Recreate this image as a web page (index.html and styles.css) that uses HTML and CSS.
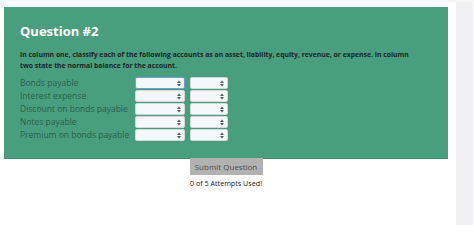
FILE: index.html
```html
<!DOCTYPE html>
<html>
<head>
<meta charset="utf-8">
<link rel="stylesheet" href="styles.css">
</head>
<body>
<div class="page">
  <div class="main">
    <div class="question">
      <h2 class="title">Question #2</h2>
      <p class="prompt">In column one, classify each of the following accounts as an asset, liability, equity, revenue, or expense. In column two state the normal balance for the account.</p>
      <div class="rows">
        <div class="row">
          <span class="label">Bonds payable</span>
          <div class="sel wide focus"><svg class="arr" viewBox="0 0 4 7"><path d="M0 3 L2 0.5 L4 3 Z M0 4 L2 6.5 L4 4 Z"/></svg></div>
          <div class="sel narrow"><svg class="arr" viewBox="0 0 4 7"><path d="M0 3 L2 0.5 L4 3 Z M0 4 L2 6.5 L4 4 Z"/></svg></div>
        </div>
        <div class="row">
          <span class="label">Interest expense</span>
          <div class="sel wide"><svg class="arr" viewBox="0 0 4 7"><path d="M0 3 L2 0.5 L4 3 Z M0 4 L2 6.5 L4 4 Z"/></svg></div>
          <div class="sel narrow"><svg class="arr" viewBox="0 0 4 7"><path d="M0 3 L2 0.5 L4 3 Z M0 4 L2 6.5 L4 4 Z"/></svg></div>
        </div>
        <div class="row">
          <span class="label">Discount on bonds payable</span>
          <div class="sel wide"><svg class="arr" viewBox="0 0 4 7"><path d="M0 3 L2 0.5 L4 3 Z M0 4 L2 6.5 L4 4 Z"/></svg></div>
          <div class="sel narrow"><svg class="arr" viewBox="0 0 4 7"><path d="M0 3 L2 0.5 L4 3 Z M0 4 L2 6.5 L4 4 Z"/></svg></div>
        </div>
        <div class="row">
          <span class="label">Notes payable</span>
          <div class="sel wide"><svg class="arr" viewBox="0 0 4 7"><path d="M0 3 L2 0.5 L4 3 Z M0 4 L2 6.5 L4 4 Z"/></svg></div>
          <div class="sel narrow"><svg class="arr" viewBox="0 0 4 7"><path d="M0 3 L2 0.5 L4 3 Z M0 4 L2 6.5 L4 4 Z"/></svg></div>
        </div>
        <div class="row">
          <span class="label">Premium on bonds payable</span>
          <div class="sel wide"><svg class="arr" viewBox="0 0 4 7"><path d="M0 3 L2 0.5 L4 3 Z M0 4 L2 6.5 L4 4 Z"/></svg></div>
          <div class="sel narrow"><svg class="arr" viewBox="0 0 4 7"><path d="M0 3 L2 0.5 L4 3 Z M0 4 L2 6.5 L4 4 Z"/></svg></div>
        </div>
      </div>
    </div>
    <div class="actions">
      <button class="submit">Submit Question</button>
      <div class="attempts">0 of 5 Attempts Used!</div>
    </div>
  </div>
  <div class="strip"></div>
</div>
</body>
</html>
```
FILE: styles.css
```css
html, body {
  margin: 0;
  padding: 0;
  background: #ffffff;
  font-family: "Open Sans", "Liberation Sans", sans-serif;
}
.page {
  display: flex;
  width: 474px;
  height: 225px;
  border-top: 2px solid #f6f6f7;
  box-sizing: border-box;
}
.main {
  width: 456px;
  padding: 5px 8px 0 4px;
  box-sizing: border-box;
}
.strip {
  width: 17px;
  background: #f0f0f2;
}
.question {
  background: #4a9e80;
  padding: 16px 16px 17px 16px;
  box-shadow: 0 1px 0 #3f8b70;
}
.title {
  margin: 0;
  color: #ffffff;
  font-size: 13px;
  font-weight: 700;
  line-height: 17px;
}
.prompt {
  margin: 9px 0 6px 0;
  padding-right: 14px;
  color: #17261f;
  font-size: 6.85px;
  font-weight: 700;
  line-height: 11px;
}
.rows {
  display: flex;
  flex-direction: column;
  gap: 1px;
}
.row {
  display: flex;
  align-items: center;
  height: 12px;
}
.label {
  width: 115px;
  color: #285f4b;
  font-size: 8.5px;
  line-height: 12px;
  white-space: nowrap;
}
.sel {
  height: 12px;
  box-sizing: border-box;
  background: #f6f7f9;
  border: 1px solid #d4d8d6;
  border-radius: 2px;
  display: flex;
  justify-content: flex-end;
  align-items: center;
  padding-right: 3px;
}
.sel.focus {
  border-color: #6f9fd0;
}
.wide {
  width: 50px;
  margin-right: 5px;
}
.narrow {
  width: 38px;
}
.arr {
  width: 4px;
  height: 7px;
  fill: #555a58;
}
.actions {
  display: flex;
  flex-direction: column;
  align-items: center;
}
.submit {
  width: 73px;
  height: 17px;
  border: none;
  background: #b2b2b2;
  color: #4d4d4d;
  font-family: "Open Sans", "Liberation Sans", sans-serif;
  font-size: 8px;
  padding: 0;
}
.attempts {
  margin-top: 3px;
  color: #222222;
  font-size: 7.2px;
  line-height: 10px;
}
```
